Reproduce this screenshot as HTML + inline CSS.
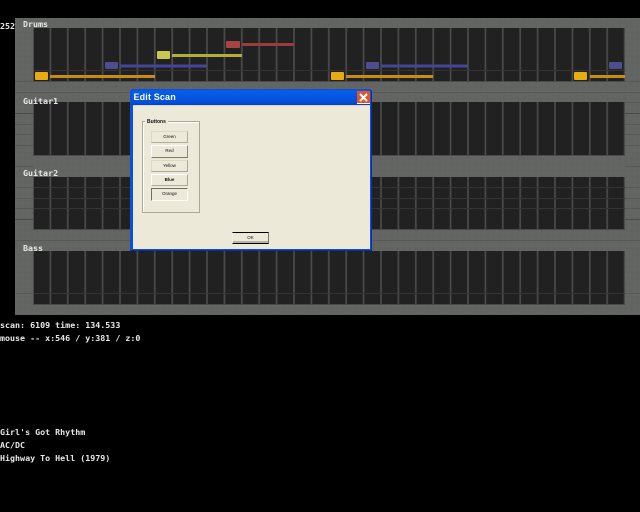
<!DOCTYPE html>
<html><head><meta charset="utf-8"><style>
html,body{margin:0;padding:0;background:#000;width:640px;height:512px;overflow:hidden}
.t{position:absolute;font:bold 8.33px/10px "DejaVu Sans Mono","Liberation Mono",monospace;color:#e8e8e8;white-space:pre}
.w{position:absolute;box-sizing:border-box}
.b{position:absolute;left:151px;width:37px;height:12px;box-sizing:border-box;background:#ece9d8;font:4.5px/10px "Liberation Sans",sans-serif;color:#111;text-align:center}
</style></head><body>
<svg width="640" height="512" style="position:absolute;left:0;top:0">
<defs>
<pattern id="n" width="6" height="6" patternUnits="userSpaceOnUse"><rect width="6" height="6" fill="#636563"/><rect x="1" y="2" width="2" height="1" fill="#5f615f"/><rect x="4" y="4" width="1" height="1" fill="#676967"/><rect x="3" y="0" width="1" height="1" fill="#676967"/></pattern>
<pattern id="g" x="33" y="0" width="17.4" height="10" patternUnits="userSpaceOnUse"><rect width="17.4" height="10" fill="#212121"/><rect x="16.6" width="0.8" height="10" fill="#4c4c4c"/><rect x="0" width="0.8" height="10" fill="#4c4c4c"/></pattern>
</defs>
<rect x="15" y="18" width="625" height="297" fill="url(#n)"/>
<rect x="33" y="28" width="592" height="54" fill="url(#g)"/>
<rect x="33" y="102" width="592" height="54" fill="url(#g)"/>
<rect x="33" y="177" width="592" height="53" fill="url(#g)"/>
<rect x="33" y="251" width="592" height="54" fill="url(#g)"/>
<g fill="#212121"><rect x="625" y="28" width="0" height="0"/></g>
<g stroke="#575957" stroke-width="1">
<path d="M15 81.5H33M625 81.5H640M15 92.500H640M15 124.500H33M15 134.500H33M15 145.500H33M625 102.500H640M625 124.500H640M625 134.500H640M625 145.500H640"/>
<path d="M15 166.500H33M625 166.500H640M15 187.500H33M625 187.500H640M15 198.500H33M625 198.500H640M15 208.500H33M625 208.500H640M15 240.500H640M15 293.500H33M625 293.500H640"/>
<path d="M15 113.500H33M625 113.500H640M15 219.500H33M625 219.500H640" stroke="#484a48"/>
<path d="M33 70.500H625M33 293.500H625M33 187.500H625M33 198.500H625M33 208.500H625" stroke="#343434"/>
</g>
<g fill="#4a4a4a"><rect x="33" y="28" width="1" height="54"/><rect x="33" y="102" width="1" height="54"/><rect x="33" y="177" width="1" height="53"/><rect x="33" y="251" width="1" height="54"/><rect x="33" y="81" width="592" height="1"/><rect x="33" y="155" width="592" height="1"/><rect x="33" y="229" width="592" height="1"/><rect x="33" y="304" width="592" height="1"/></g>
<g fill="#c98c12"><rect x="50" y="75" width="105" height="3"/><rect x="346" y="75" width="87" height="3"/><rect x="590" y="75" width="35" height="3"/></g>
<g fill="#e9ab12"><rect x="35" y="72" width="13" height="8" rx="1"/><rect x="331" y="72" width="13" height="8" rx="1"/><rect x="574" y="72" width="13" height="8" rx="1"/></g>
<g fill="#45459c"><rect x="120" y="64.500" width="87" height="3"/><rect x="381" y="64.500" width="87" height="3"/></g>
<g fill="#4d4d8f"><rect x="105" y="62" width="13" height="7" rx="1"/><rect x="366" y="62" width="13" height="7" rx="1"/><rect x="609" y="62" width="13" height="7" rx="1"/></g>
<rect x="172" y="54" width="70" height="3" fill="#b3b030"/><rect x="157" y="51" width="13" height="8" rx="1" fill="#c8c550"/>
<rect x="242" y="43" width="52" height="3" fill="#983c3c"/><rect x="226" y="41" width="14" height="7" rx="1" fill="#a84444"/>
</svg>
<div class="t" style="left:0;top:21px">252</div>
<div class="t" style="left:23px;top:19px">Drums</div>
<div class="t" style="left:23px;top:96px">Guitar1</div>
<div class="t" style="left:23px;top:168px">Guitar2</div>
<div class="t" style="left:23px;top:243px">Bass</div>
<div class="t" style="left:0;top:320px">scan: 6109 time: 134.533</div>
<div class="t" style="left:0;top:333px">mouse -- x:546 / y:381 / z:0</div>
<div class="t" style="left:0;top:427px">Girl's Got Rhythm</div>
<div class="t" style="left:0;top:440px">AC/DC</div>
<div class="t" style="left:0;top:453px">Highway To Hell (1979)</div>

<div class="w" style="left:130px;top:89px;width:242px;height:162px;background:#0a50d8;border-radius:3px 3px 0 0;border-right:1px solid #0a2ea0;border-bottom:1px solid #0a2ea0"></div>
<div class="w" style="left:131px;top:90px;width:239px;height:15px;background:linear-gradient(#0a5ce8 0,#0458e4 40%,#0450dc 80%,#0345c4 100%);border-radius:3px 3px 0 0"></div>
<div class="w" style="left:133px;top:105px;width:237px;height:144px;background:#ece9d8;border-top:1px solid #d8d5c4"></div>
<div class="t" style="left:133.500px;top:92px;color:#fff;font:bold 9px/11px 'Liberation Sans',sans-serif;letter-spacing:.15px">Edit Scan</div>
<svg class="w" style="left:357px;top:91px" width="13" height="13" viewBox="0 0 13 13"><rect width="13" height="13" fill="#e0552c"/><rect x="0" y="12" width="13" height="1" fill="#fff"/><path d="M3 3L10 10M10 3L3 10" stroke="#fff" stroke-width="2"/></svg>

<div class="w" style="left:142px;top:121px;width:58px;height:92px;border:1px solid #aca899;box-shadow:inset 1px 1px 0 #fff"></div>
<div class="w" style="left:145px;top:118.500px;background:#ece9d8;padding:0 2px;font:bold 5px/7px 'Liberation Sans',sans-serif;color:#111">Buttons</div>
<div class="b" style="top:131px;border:1px solid #dad7c6;border-bottom-color:#b0ad9c;border-right-color:#b0ad9c">Green</div>
<div class="b" style="top:145px;height:13px;border:1px solid #fff;border-bottom:1px solid #7a7868;border-right-color:#8e8c7c">Red</div>
<div class="b" style="top:160px;border:1px solid #dad7c6;border-bottom-color:#aca899;border-right-color:#aca899">Yellow</div>
<div class="b" style="top:174px;border:1px solid #fff;border-bottom-color:#aca899;border-right-color:#aca899;font-weight:bold">Blue</div>
<div class="b" style="top:188px;height:13px;border:1px solid #716f64;border-bottom-color:#fff;border-right-color:#fff">Orange</div>
<div class="b" style="left:232px;top:232px;height:12px;border:1px solid #000;border-left-color:#eee;border-right-color:#777;box-shadow:inset 0 -2px 0 #b8b5a4">OK</div>
</body></html>
